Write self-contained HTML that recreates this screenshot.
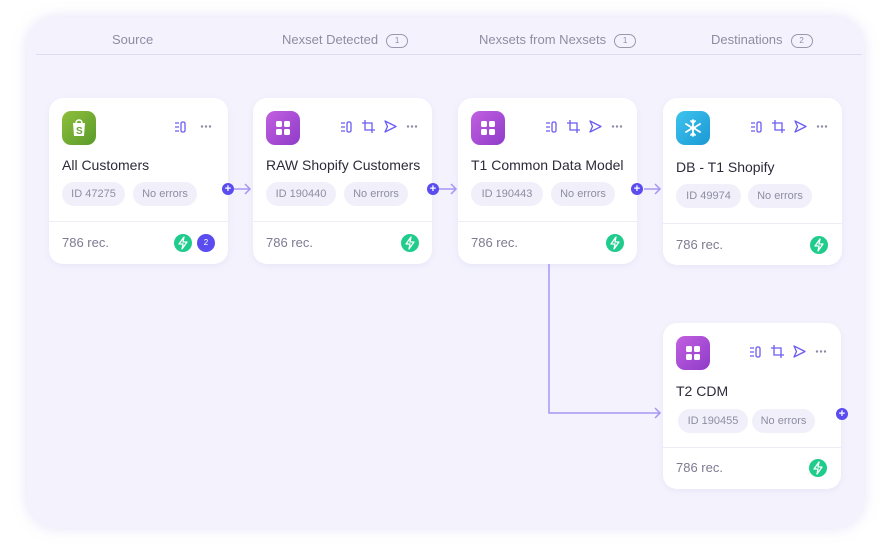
<!DOCTYPE html><html><head><style>
*{margin:0;padding:0;box-sizing:border-box}
body{width:890px;height:545px;background:#fff;font-family:"Liberation Sans",sans-serif;position:relative;overflow:hidden}
.wrap{position:absolute;left:27px;top:17px;width:837px;height:511px;background:#f4f3fd;border-radius:30px;box-shadow:0 0 14px rgba(180,170,230,.35)}
.hline{position:absolute;left:36px;top:54px;width:826px;height:1px;background:#dedcf5}
.h{position:absolute;top:32px;font-size:13px;color:#8e8ca3}
.bd{display:inline-block;width:22px;height:14px;border:1px solid #9a98ae;border-radius:8px;font-size:8px;text-align:center;line-height:12px;margin-left:8px;vertical-align:1px}
.card{position:absolute;width:179px;height:166px;background:#fff;border-radius:14px;box-shadow:0 2px 8px rgba(150,140,210,.12)}
.ic{position:absolute;left:13px;top:13px;width:34px;height:34px;border-radius:9px}
.pur{background:linear-gradient(135deg,#c260e0,#8f3bc9)}
.grid{position:absolute;left:10px;top:10px;width:14px;height:14px;display:grid;grid-template-columns:6px 6px;gap:2px}
.grid i{background:#fff;border-radius:1.5px}
.t{position:absolute;left:13px;top:59px;font-size:14px;color:#2d2b3a}
.chip{position:absolute;top:84px;height:24px;border-radius:12px;background:#f1f0fa;color:#8e8ca3;font-size:11px;line-height:24px;text-align:center}
.div{position:absolute;left:0;right:0;top:123px;height:1px;background:#eeedf6}
.rec{position:absolute;left:13px;top:137px;font-size:13px;color:#7d7b90}
.bolt{position:absolute;width:18px;height:18px;border-radius:50%;background:#1fcc8c}
.tools{position:absolute;right:14px;top:22px;height:14px}
.plus{position:absolute;width:12px;height:12px;border-radius:50%;background:#5b4cf0;color:#fff;font-size:11px;line-height:12px;text-align:center;font-weight:bold}
</style></head><body>
<div class="wrap"></div>
<div class="hline"></div>
<div class="h" style="left:112px">Source</div>
<div class="h" style="left:282px">Nexset Detected<span class="bd">1</span></div>
<div class="h" style="left:479px">Nexsets from Nexsets<span class="bd">1</span></div>
<div class="h" style="left:711px">Destinations<span class="bd">2</span></div>

<svg width="890" height="545" style="position:absolute;left:0;top:0" fill="none" stroke="#a996f5" stroke-width="1.5">
<path d="M234 189H250M245 184L250 189L245 194"/>
<path d="M439 189H456M451 184L456 189L451 194"/>
<path d="M644 189H660M655 184L660 189L655 194"/>
<path d="M549 264V413H660M655 408L660 413L655 418"/>
</svg>

<!-- svg symbols -->
<svg width="0" height="0" style="position:absolute">
<defs>
<g id="cols" stroke="#6a5cf0" stroke-width="1.3" fill="none"><path d="M1 3H5M1 7H5M1 11H5"/><rect x="7" y="2" width="4" height="10" rx="1.5"/></g>
<g id="crop" stroke="#6a5cf0" stroke-width="1.3" fill="none"><path d="M3 0V10H13M0 3H10V13"/></g>
<g id="send" stroke="#6a5cf0" stroke-width="1.3" fill="none" stroke-linejoin="round"><path d="M1 1L12 6.5L1 12L3.5 6.5Z"/></g>
<g id="dots" fill="#8e8ca3"><circle cx="2" cy="6.5" r="1.2"/><circle cx="6" cy="6.5" r="1.2"/><circle cx="10" cy="6.5" r="1.2"/></g>
<g id="bolt" stroke="#fff" stroke-width="1.3" fill="none" stroke-linejoin="round"><path d="M10 3L5 10H9L8 15L13 8H9Z"/></g>
</defs></svg>

<!-- card1 -->
<div class="card" style="left:49px;top:98px">
<div class="ic" style="background:linear-gradient(135deg,#8ebf3c,#5a9a2a)"><svg width="34" height="34"><path d="M11 12H23L22 25H12Z" fill="#fff"/><path d="M14 12C14 8 20 8 20 12" stroke="#fff" stroke-width="1.5" fill="none"/><text x="14" y="23" font-size="10" font-weight="bold" fill="#6aa331" font-family="Liberation Sans">S</text></svg></div>
<svg class="tools" style="right:14px" width="40" height="14"><use href="#cols" x="0"/><use href="#dots" x="26"/></svg>
<div class="t">All Customers</div>
<div class="chip" style="left:13px;width:63px">ID 47275</div>
<div class="chip" style="left:84px;width:64px">No errors</div>
<div class="div"></div>
<div class="rec">786 rec.</div>
<div class="bolt" style="left:125px;top:136px"><svg width="18" height="18"><use href="#bolt"/></svg></div>
<div style="position:absolute;left:148px;top:136px;width:18px;height:18px;border-radius:50%;background:#5b4cf0;color:#fff;font-size:8px;line-height:18px;text-align:center">2</div>
</div>
<div class="plus" style="left:222px;top:183px">+</div>

<!-- card2 -->
<div class="card" style="left:253px;top:98px">
<div class="ic pur"><div class="grid"><i></i><i></i><i></i><i></i></div></div>
<svg class="tools" width="78" height="14"><use href="#cols" x="0"/><use href="#crop" x="22"/><use href="#send" x="44"/><use href="#dots" x="66"/></svg>
<div class="t">RAW Shopify Customers</div>
<div class="chip" style="left:13px;width:70px">ID 190440</div>
<div class="chip" style="left:91px;width:64px">No errors</div>
<div class="div"></div>
<div class="rec">786 rec.</div>
<div class="bolt" style="left:148px;top:136px"><svg width="18" height="18"><use href="#bolt"/></svg></div>
</div>
<div class="plus" style="left:427px;top:183px">+</div>

<!-- card3 -->
<div class="card" style="left:458px;top:98px">
<div class="ic pur"><div class="grid"><i></i><i></i><i></i><i></i></div></div>
<svg class="tools" width="78" height="14"><use href="#cols" x="0"/><use href="#crop" x="22"/><use href="#send" x="44"/><use href="#dots" x="66"/></svg>
<div class="t">T1 Common Data Model</div>
<div class="chip" style="left:13px;width:72px">ID 190443</div>
<div class="chip" style="left:93px;width:64px">No errors</div>
<div class="div"></div>
<div class="rec">786 rec.</div>
<div class="bolt" style="left:148px;top:136px"><svg width="18" height="18"><use href="#bolt"/></svg></div>
</div>
<div class="plus" style="left:631px;top:183px">+</div>

<!-- card4 -->
<div class="card" style="left:663px;top:98px;height:167px">
<div class="ic" style="background:linear-gradient(135deg,#3ec4ee,#1a98d4)"><svg width="34" height="34" stroke="#fff" stroke-width="1.8" stroke-linecap="round"><path d="M17 9V14M17 20V25M10 13L14 15.5M20 18.5L24 21M24 13L20 15.5M14 18.5L10 21M15 10L17 12L19 10M15 24L17 22L19 24"/><path d="M17 15L19 17L17 19L15 17Z" fill="#fff"/></svg></div>
<svg class="tools" width="78" height="14"><use href="#cols" x="0"/><use href="#crop" x="22"/><use href="#send" x="44"/><use href="#dots" x="66"/></svg>
<div class="t" style="top:61px">DB - T1 Shopify</div>
<div class="chip" style="left:13px;width:65px;top:86px">ID 49974</div>
<div class="chip" style="left:85px;width:64px;top:86px">No errors</div>
<div class="div" style="top:125px"></div>
<div class="rec" style="top:139px">786 rec.</div>
<div class="bolt" style="left:147px;top:138px"><svg width="18" height="18"><use href="#bolt"/></svg></div>
</div>

<!-- card5 -->
<div class="card" style="left:663px;top:323px;height:166px;width:178px">
<div class="ic pur"><div class="grid"><i></i><i></i><i></i><i></i></div></div>
<svg class="tools" width="78" height="14"><use href="#cols" x="0"/><use href="#crop" x="22"/><use href="#send" x="44"/><use href="#dots" x="66"/></svg>
<div class="t" style="top:60px">T2 CDM</div>
<div class="chip" style="left:15px;width:70px;top:86px">ID 190455</div>
<div class="chip" style="left:89px;width:63px;top:86px">No errors</div>
<div class="div" style="top:124px"></div>
<div class="rec" style="top:137px">786 rec.</div>
<div class="bolt" style="left:146px;top:136px"><svg width="18" height="18"><use href="#bolt"/></svg></div>
</div>
<div class="plus" style="left:836px;top:408px">+</div>
</body></html>
